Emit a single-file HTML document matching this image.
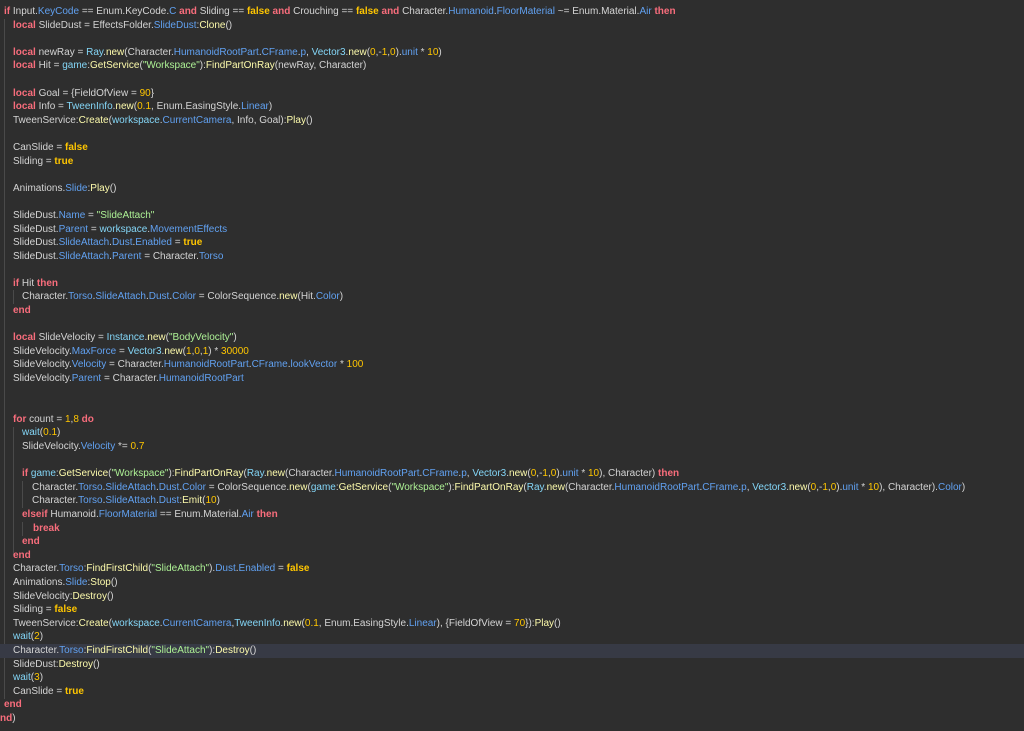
<!DOCTYPE html>
<html><head><meta charset="utf-8"><style>
html,body{margin:0;padding:0;background:#2e2e2e;width:1024px;height:731px;overflow:hidden}
#c{position:relative;padding-top:5px;font-family:"Liberation Sans",sans-serif;font-size:10px;color:#d4d4d4}
.l{height:13.6px;line-height:13.6px;position:relative;white-space:pre}
.hl{background:#373a45}
.k{color:#f86d7c;font-weight:bold}
.p{color:#61a1f1}
.g{color:#84d6f7}
.n{color:#ffc600}
.b{color:#ffc600;font-weight:bold}
.s{color:#adf195}
.f{color:#fdfbac}
.gd{position:absolute;width:1px;background:#4a4a4a}
</style></head><body><div id="c"><div class="gd" style="left:4px;top:19px;height:680px"></div><div class="gd" style="left:13px;top:290px;height:14px"></div><div class="gd" style="left:13px;top:427px;height:128px"></div><div class="gd" style="left:22px;top:481px;height:27px"></div><div class="gd" style="left:22px;top:522px;height:14px"></div>
<div class="l" style="padding-left:4px"><span class="k">if</span> Input.<span class="p">KeyCode</span> == Enum.KeyCode.<span class="p">C</span> <span class="k">and</span> Sliding == <span class="b">false</span> <span class="k">and</span> Crouching == <span class="b">false</span> <span class="k">and</span> Character.<span class="p">Humanoid</span>.<span class="p">FloorMaterial</span> ~= Enum.Material.<span class="p">Air</span> <span class="k">then</span></div>
<div class="l" style="padding-left:13px"><span class="k">local</span> SlideDust = EffectsFolder.<span class="p">SlideDust</span>:<span class="f">Clone</span>()</div>
<div class="l"></div>
<div class="l" style="padding-left:13px"><span class="k">local</span> newRay = <span class="g">Ray</span>.<span class="f">new</span>(Character.<span class="p">HumanoidRootPart</span>.<span class="p">CFrame</span>.<span class="p">p</span>, <span class="g">Vector3</span>.<span class="f">new</span>(<span class="n">0</span>,-<span class="n">1</span>,<span class="n">0</span>).<span class="p">unit</span> * <span class="n">10</span>)</div>
<div class="l" style="padding-left:13px"><span class="k">local</span> Hit = <span class="g">game</span>:<span class="f">GetService</span>(<span class="s">"Workspace"</span>):<span class="f">FindPartOnRay</span>(newRay, Character)</div>
<div class="l"></div>
<div class="l" style="padding-left:13px"><span class="k">local</span> Goal = {FieldOfView = <span class="n">90</span>}</div>
<div class="l" style="padding-left:13px"><span class="k">local</span> Info = <span class="g">TweenInfo</span>.<span class="f">new</span>(<span class="n">0.1</span>, Enum.EasingStyle.<span class="p">Linear</span>)</div>
<div class="l" style="padding-left:13px">TweenService:<span class="f">Create</span>(<span class="g">workspace</span>.<span class="p">CurrentCamera</span>, Info, Goal):<span class="f">Play</span>()</div>
<div class="l"></div>
<div class="l" style="padding-left:13px">CanSlide = <span class="b">false</span></div>
<div class="l" style="padding-left:13px">Sliding = <span class="b">true</span></div>
<div class="l"></div>
<div class="l" style="padding-left:13px">Animations.<span class="p">Slide</span>:<span class="f">Play</span>()</div>
<div class="l"></div>
<div class="l" style="padding-left:13px">SlideDust.<span class="p">Name</span> = <span class="s">"SlideAttach"</span></div>
<div class="l" style="padding-left:13px">SlideDust.<span class="p">Parent</span> = <span class="g">workspace</span>.<span class="p">MovementEffects</span></div>
<div class="l" style="padding-left:13px">SlideDust.<span class="p">SlideAttach</span>.<span class="p">Dust</span>.<span class="p">Enabled</span> = <span class="b">true</span></div>
<div class="l" style="padding-left:13px">SlideDust.<span class="p">SlideAttach</span>.<span class="p">Parent</span> = Character.<span class="p">Torso</span></div>
<div class="l"></div>
<div class="l" style="padding-left:13px"><span class="k">if</span> Hit <span class="k">then</span></div>
<div class="l" style="padding-left:22px">Character.<span class="p">Torso</span>.<span class="p">SlideAttach</span>.<span class="p">Dust</span>.<span class="p">Color</span> = ColorSequence.<span class="f">new</span>(Hit.<span class="p">Color</span>)</div>
<div class="l" style="padding-left:13px"><span class="k">end</span></div>
<div class="l"></div>
<div class="l" style="padding-left:13px"><span class="k">local</span> SlideVelocity = <span class="g">Instance</span>.<span class="f">new</span>(<span class="s">"BodyVelocity"</span>)</div>
<div class="l" style="padding-left:13px">SlideVelocity.<span class="p">MaxForce</span> = <span class="g">Vector3</span>.<span class="f">new</span>(<span class="n">1</span>,<span class="n">0</span>,<span class="n">1</span>) * <span class="n">30000</span></div>
<div class="l" style="padding-left:13px">SlideVelocity.<span class="p">Velocity</span> = Character.<span class="p">HumanoidRootPart</span>.<span class="p">CFrame</span>.<span class="p">lookVector</span> * <span class="n">100</span></div>
<div class="l" style="padding-left:13px">SlideVelocity.<span class="p">Parent</span> = Character.<span class="p">HumanoidRootPart</span></div>
<div class="l"></div>
<div class="l"></div>
<div class="l" style="padding-left:13px"><span class="k">for</span> count = <span class="n">1</span>,<span class="n">8</span> <span class="k">do</span></div>
<div class="l" style="padding-left:22px"><span class="g">wait</span>(<span class="n">0.1</span>)</div>
<div class="l" style="padding-left:22px">SlideVelocity.<span class="p">Velocity</span> *= <span class="n">0.7</span></div>
<div class="l"></div>
<div class="l" style="padding-left:22px"><span class="k">if</span> <span class="g">game</span>:<span class="f">GetService</span>(<span class="s">"Workspace"</span>):<span class="f">FindPartOnRay</span>(<span class="g">Ray</span>.<span class="f">new</span>(Character.<span class="p">HumanoidRootPart</span>.<span class="p">CFrame</span>.<span class="p">p</span>, <span class="g">Vector3</span>.<span class="f">new</span>(<span class="n">0</span>,-<span class="n">1</span>,<span class="n">0</span>).<span class="p">unit</span> * <span class="n">10</span>), Character) <span class="k">then</span></div>
<div class="l" style="padding-left:32px">Character.<span class="p">Torso</span>.<span class="p">SlideAttach</span>.<span class="p">Dust</span>.<span class="p">Color</span> = ColorSequence.<span class="f">new</span>(<span class="g">game</span>:<span class="f">GetService</span>(<span class="s">"Workspace"</span>):<span class="f">FindPartOnRay</span>(<span class="g">Ray</span>.<span class="f">new</span>(Character.<span class="p">HumanoidRootPart</span>.<span class="p">CFrame</span>.<span class="p">p</span>, <span class="g">Vector3</span>.<span class="f">new</span>(<span class="n">0</span>,-<span class="n">1</span>,<span class="n">0</span>).<span class="p">unit</span> * <span class="n">10</span>), Character).<span class="p">Color</span>)</div>
<div class="l" style="padding-left:32px">Character.<span class="p">Torso</span>.<span class="p">SlideAttach</span>.<span class="p">Dust</span>:<span class="f">Emit</span>(<span class="n">10</span>)</div>
<div class="l" style="padding-left:22px"><span class="k">elseif</span> Humanoid.<span class="p">FloorMaterial</span> == Enum.Material.<span class="p">Air</span> <span class="k">then</span></div>
<div class="l" style="padding-left:33px"><span class="k">break</span></div>
<div class="l" style="padding-left:22px"><span class="k">end</span></div>
<div class="l" style="padding-left:13px"><span class="k">end</span></div>
<div class="l" style="padding-left:13px">Character.<span class="p">Torso</span>:<span class="f">FindFirstChild</span>(<span class="s">"SlideAttach"</span>).<span class="p">Dust</span>.<span class="p">Enabled</span> = <span class="b">false</span></div>
<div class="l" style="padding-left:13px">Animations.<span class="p">Slide</span>:<span class="f">Stop</span>()</div>
<div class="l" style="padding-left:13px">SlideVelocity:<span class="f">Destroy</span>()</div>
<div class="l" style="padding-left:13px">Sliding = <span class="b">false</span></div>
<div class="l" style="padding-left:13px">TweenService:<span class="f">Create</span>(<span class="g">workspace</span>.<span class="p">CurrentCamera</span>,<span class="g">TweenInfo</span>.<span class="f">new</span>(<span class="n">0.1</span>, Enum.EasingStyle.<span class="p">Linear</span>), {FieldOfView = <span class="n">70</span>}):<span class="f">Play</span>()</div>
<div class="l" style="padding-left:13px"><span class="g">wait</span>(<span class="n">2</span>)</div>
<div class="l hl" style="padding-left:13px">Character.<span class="p">Torso</span>:<span class="f">FindFirstChild</span>(<span class="s">"SlideAttach"</span>):<span class="f">Destroy</span>()</div>
<div class="l" style="padding-left:13px">SlideDust:<span class="f">Destroy</span>()</div>
<div class="l" style="padding-left:13px"><span class="g">wait</span>(<span class="n">3</span>)</div>
<div class="l" style="padding-left:13px">CanSlide = <span class="b">true</span></div>
<div class="l" style="padding-left:4px"><span class="k">end</span></div>
<div class="l" style="padding-left:0px"><span class="k">nd</span>)</div>
</div></body></html>
